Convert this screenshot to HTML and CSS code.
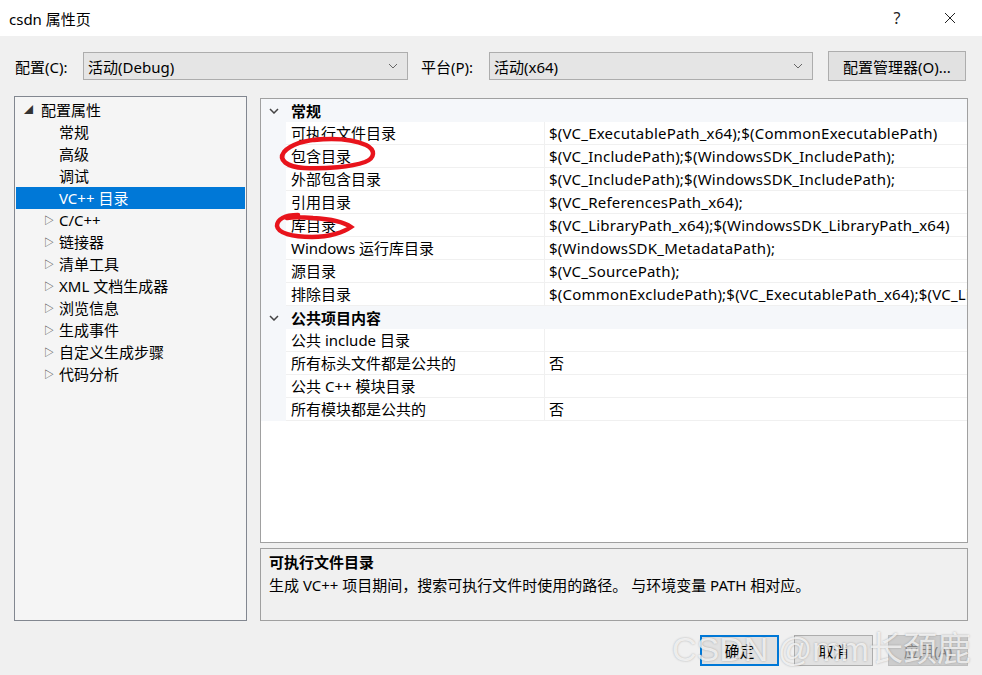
FILE: index.html
```html
<!DOCTYPE html>
<html lang="zh-CN">
<head>
    <meta charset="UTF-8">
    <title>csdn 属性页</title>
    <link rel="stylesheet" href="styles.css">
</head>
<body>
<div class="dialog">
    <div class="titlebar">
        <div class="title">csdn 属性页</div>
        <div class="help">?</div>
        <div class="close">
            <svg width="12" height="12" viewBox="0 0 12 12"><path d="M1 1 L11 11 M11 1 L1 11" stroke="#222" stroke-width="1"/></svg>
        </div>
    </div>

    <div class="toolbar">
        <span class="lbl">配置(C):</span>
        <div class="combo combo-config">
            <span>活动(Debug)</span>
            <svg width="10" height="6" viewBox="0 0 10 6"><path d="M1 1 L5 5 L9 1" fill="none" stroke="#666" stroke-width="1"/></svg>
        </div>
        <span class="lbl lbl-platform">平台(P):</span>
        <div class="combo combo-platform">
            <span>活动(x64)</span>
            <svg width="10" height="6" viewBox="0 0 10 6"><path d="M1 1 L5 5 L9 1" fill="none" stroke="#666" stroke-width="1"/></svg>
        </div>
        <div class="btn btn-manager">配置管理器(O)...</div>
    </div>

    <div class="main">
        <div class="tree">
            <div class="node top"><span class="arrow-open">◢</span>配置属性</div>
            <div class="node leaf">常规</div>
            <div class="node leaf">高级</div>
            <div class="node leaf">调试</div>
            <div class="node leaf selected">VC++ 目录</div>
            <div class="node child"><span class="arrow">▷</span>C/C++</div>
            <div class="node child"><span class="arrow">▷</span>链接器</div>
            <div class="node child"><span class="arrow">▷</span>清单工具</div>
            <div class="node child"><span class="arrow">▷</span>XML 文档生成器</div>
            <div class="node child"><span class="arrow">▷</span>浏览信息</div>
            <div class="node child"><span class="arrow">▷</span>生成事件</div>
            <div class="node child"><span class="arrow">▷</span>自定义生成步骤</div>
            <div class="node child"><span class="arrow">▷</span>代码分析</div>
        </div>

        <div class="right">
            <div class="grid">
                <div class="cat">
                    <svg class="chev" width="10" height="6" viewBox="0 0 10 6"><path d="M1 1 L5 5 L9 1" fill="none" stroke="#444" stroke-width="1.5"/></svg>
                    <span>常规</span>
                </div>
                <div class="row"><div class="gut"></div><div class="name">可执行文件目录</div><div class="val">$(VC_ExecutablePath_x64);$(CommonExecutablePath)</div></div>
                <div class="row"><div class="gut"></div><div class="name">包含目录</div><div class="val">$(VC_IncludePath);$(WindowsSDK_IncludePath);</div></div>
                <div class="row"><div class="gut"></div><div class="name">外部包含目录</div><div class="val">$(VC_IncludePath);$(WindowsSDK_IncludePath);</div></div>
                <div class="row"><div class="gut"></div><div class="name">引用目录</div><div class="val">$(VC_ReferencesPath_x64);</div></div>
                <div class="row"><div class="gut"></div><div class="name">库目录</div><div class="val">$(VC_LibraryPath_x64);$(WindowsSDK_LibraryPath_x64)</div></div>
                <div class="row"><div class="gut"></div><div class="name">Windows 运行库目录</div><div class="val">$(WindowsSDK_MetadataPath);</div></div>
                <div class="row"><div class="gut"></div><div class="name">源目录</div><div class="val">$(VC_SourcePath);</div></div>
                <div class="row"><div class="gut"></div><div class="name">排除目录</div><div class="val">$(CommonExcludePath);$(VC_ExecutablePath_x64);$(VC_LibraryPath_x64)</div></div>
                <div class="cat">
                    <svg class="chev" width="10" height="6" viewBox="0 0 10 6"><path d="M1 1 L5 5 L9 1" fill="none" stroke="#444" stroke-width="1.5"/></svg>
                    <span>公共项目内容</span>
                </div>
                <div class="row"><div class="gut"></div><div class="name">公共 include 目录</div><div class="val"></div></div>
                <div class="row"><div class="gut"></div><div class="name">所有标头文件都是公共的</div><div class="val">否</div></div>
                <div class="row"><div class="gut"></div><div class="name">公共 C++ 模块目录</div><div class="val"></div></div>
                <div class="row"><div class="gut"></div><div class="name">所有模块都是公共的</div><div class="val">否</div></div>
            </div>
            <div class="desc">
                <div class="desc-title">可执行文件目录</div>
                <div class="desc-text">生成 VC++ 项目期间，搜索可执行文件时使用的路径。 与环境变量 PATH 相对应。</div>
            </div>
        </div>
    </div>

    <div class="footer">
        <div class="btn btn-ok">确定</div>
        <div class="btn">取消</div>
        <div class="btn btn-disabled">应用(A)</div>
    </div>

    <!-- red hand-drawn marks on top of the screenshot -->
    <svg class="marks" width="982" height="675" viewBox="0 0 982 675">
        <path d="M324 139 C306 140 291 144 284 152 C278 160 287 167 304 168 C326 169 351 167 365 162 C375 158 376 150 366 145 C352 139 334 138 314 140"
              fill="none" stroke="#e8141c" stroke-width="4.5" stroke-linecap="round"/>
        <path d="M298 215 C285 215 277 219 277 226 C278 233 292 237 312 237 C330 237 344 232 351 227 C344 222 330 219 313 218 C301 217 292 217 287 218"
              fill="none" stroke="#e8141c" stroke-width="4.5" stroke-linecap="round"/>
    </svg>

    <div class="watermark">CSDN @mm长颈鹿</div>
</div>
</body>
</html>
```

FILE: styles.css
```css
body {
    margin: 0;
    font-family: "Noto Sans", "Noto Sans CJK SC", sans-serif;
    font-size: 15px;
    color: #000;
    background-color: #f0f0f0;
}
.dialog {
    position: relative;
    width: 982px;
    height: 675px;
    overflow: hidden;
    background-color: #f0f0f0;
}
.titlebar {
    height: 36px;
    background-color: #fff;
    display: flex;
    align-items: center;
}
.title {
    flex: 1;
    padding-left: 9px;
}
.help {
    width: 20px;
    margin-right: 37px;
    text-align: center;
    font-size: 16px;
    color: #222;
}
.close {
    width: 12px;
    margin-right: 26px;
    display: flex;
}
.toolbar {
    height: 60px;
    display: flex;
    align-items: center;
    padding-left: 15px;
}
.lbl {
    width: 68px;
}
.lbl-platform {
    margin-left: 13px;
}
.combo {
    box-sizing: border-box;
    height: 28px;
    border: 1px solid #adadad;
    background-color: #e5e5e5;
    display: flex;
    align-items: center;
    justify-content: space-between;
    padding: 0 9px 0 4px;
}
.combo-config {
    width: 325px;
}
.combo-platform {
    width: 324px;
}
.btn {
    box-sizing: border-box;
    height: 31px;
    width: 79px;
    border: 1px solid #adadad;
    background-color: #e1e1e1;
    display: flex;
    align-items: center;
    justify-content: center;
}
.btn-manager {
    width: 138px;
    height: 30px;
    margin-left: 15px;
}
.main {
    display: flex;
    padding-left: 14px;
    height: 525px;
}
.tree {
    box-sizing: border-box;
    width: 233px;
    height: 525px;
    border: 1px solid #828790;
    background-color: #f5f5f5;
    padding: 2px 1px;
}
.node {
    height: 22px;
    line-height: 22px;
    white-space: nowrap;
}
.node.top {
    padding-left: 8px;
}
.arrow-open {
    display: inline-block;
    width: 17px;
    font-size: 9px;
    color: #333;
    vertical-align: top;
}
.node.leaf {
    padding-left: 43px;
}
.node.child {
    padding-left: 28px;
}
.arrow {
    display: inline-block;
    width: 15px;
    font-size: 10px;
    color: #333;
    vertical-align: top;
}
.node.selected {
    background-color: #0078d7;
    color: #fff;
}
.right {
    margin-left: 13px;
    width: 708px;
    display: flex;
    flex-direction: column;
}
.grid {
    box-sizing: border-box;
    margin-top: 2px;
    height: 446px;
    border: 1px solid #a0a0a0;
    background-color: #fff;
    overflow: hidden;
}
.cat {
    height: 23px;
    display: flex;
    align-items: center;
    background-color: #f5f7fa;
    font-weight: bold;
}
.chev {
    margin-left: 8px;
    margin-right: 12px;
}
.row {
    display: grid;
    grid-template-columns: 25px 258px 1fr;
    height: 23px;
}
.gut {
    background-color: #f5f7fa;
}
.name, .val {
    box-sizing: border-box;
    line-height: 23px;
    border-bottom: 1px solid #f0f0f0;
    white-space: nowrap;
    overflow: hidden;
}
.name {
    padding-left: 5px;
}
.val {
    padding-left: 4px;
    letter-spacing: 0.22px;
    border-left: 1px solid #f0f0f0;
}
.desc {
    box-sizing: border-box;
    margin-top: 5px;
    height: 73px;
    border: 1px solid #a0a0a0;
    padding: 2px 8px;
}
.desc-title {
    font-weight: bold;
    line-height: 23px;
}
.desc-text {
    line-height: 23px;
}
.footer {
    display: flex;
    justify-content: flex-end;
    gap: 15px;
    padding-right: 14px;
    margin-top: 14px;
}
.btn-ok {
    border: 2px solid #0078d7;
}
.btn-disabled {
    width: 80px;
    background-color: #cccccc;
    border-color: #bfbfbf;
    color: #838383;
}
.marks {
    position: absolute;
    left: 0;
    top: 0;
    pointer-events: none;
}
.watermark {
    position: absolute;
    left: 672px;
    top: 622px;
    font-family: "Liberation Sans", "Noto Sans CJK SC", sans-serif;
    font-size: 34px;
    color: rgba(255, 255, 255, 0.75);
    text-shadow: 0 0 2px rgba(90, 90, 90, 0.45);
    white-space: nowrap;
    pointer-events: none;
}
```
